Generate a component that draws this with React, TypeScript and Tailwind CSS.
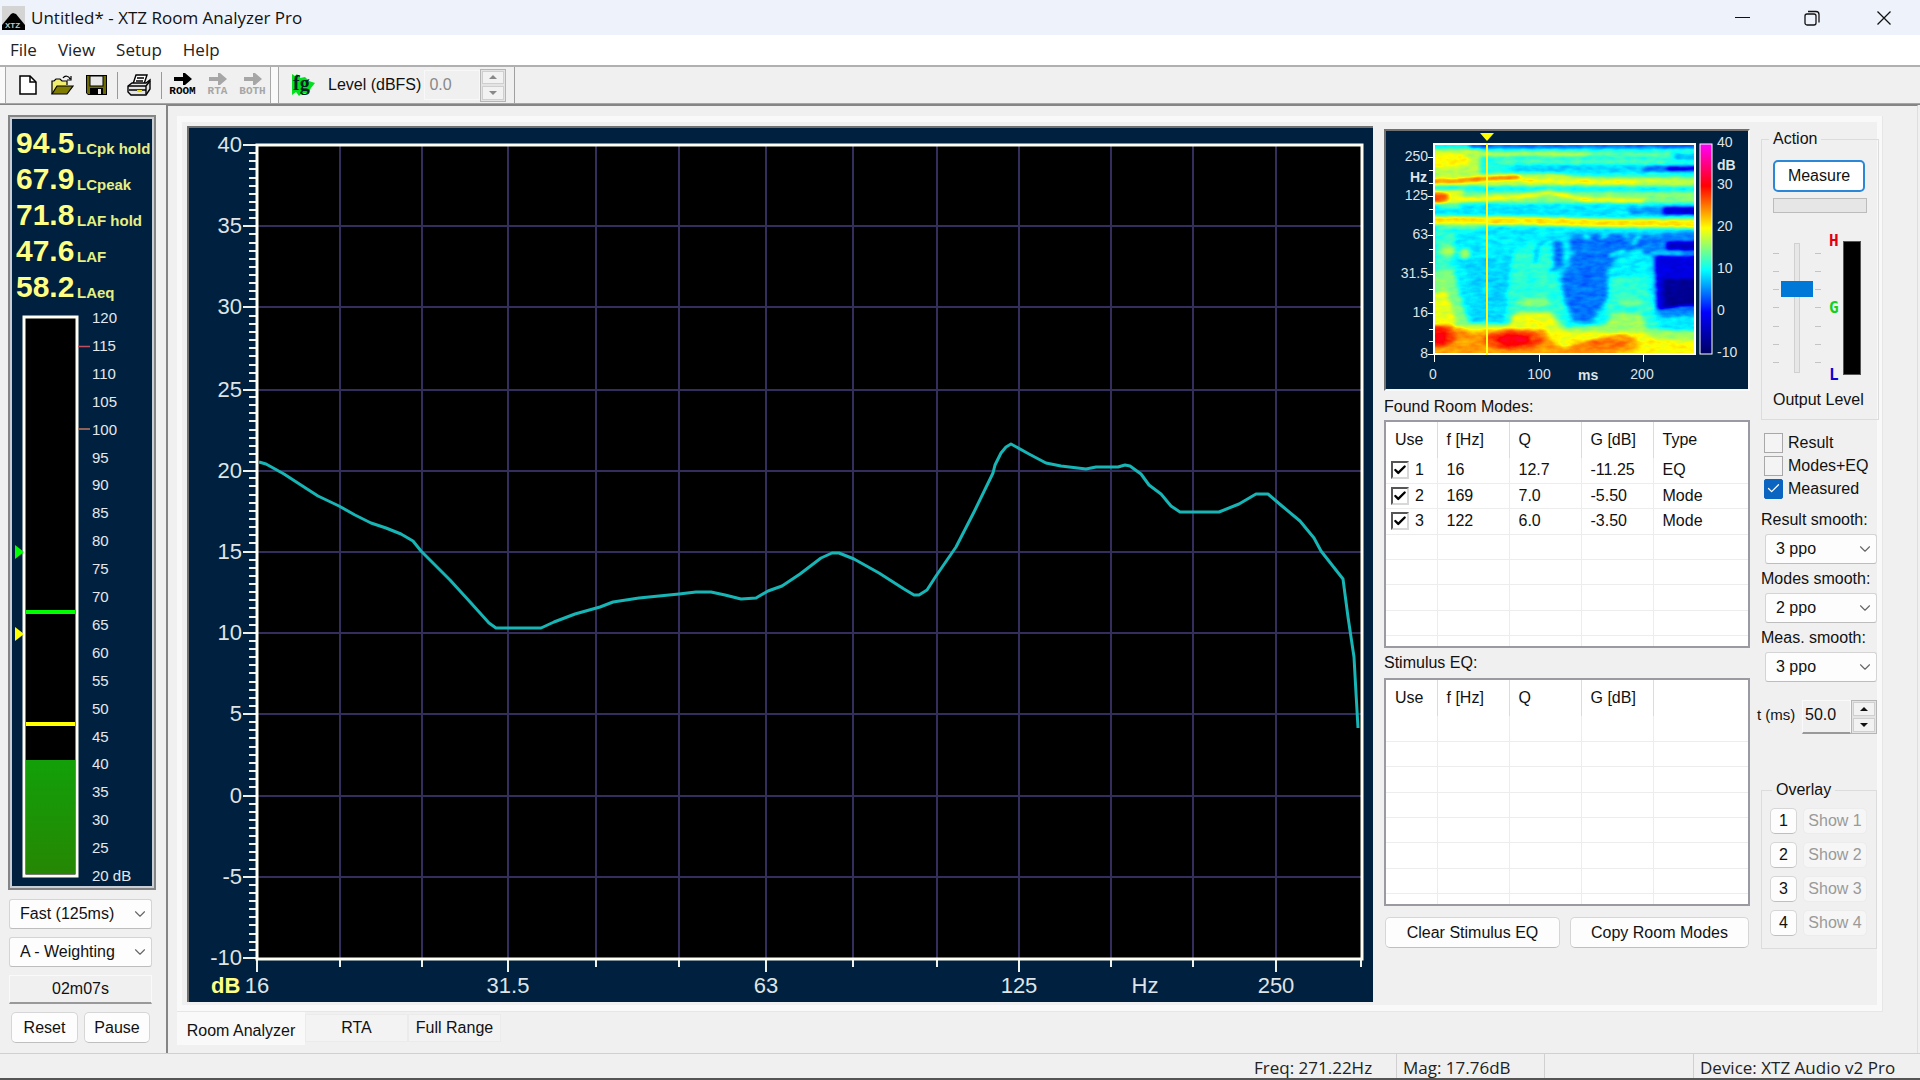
import React from "react";
import { Check, ChevronDown } from "lucide-react";

const meterReadings = [
  { value: "94.5", label: "LCpk hold" },
  { value: "67.9", label: "LCpeak" },
  { value: "71.8", label: "LAF hold" },
  { value: "47.6", label: "LAF" },
  { value: "58.2", label: "LAeq" },
];

const roomModes = [
  ["1", "16", "12.7", "-11.25", "EQ"],
  ["2", "169", "7.0", "-5.50", "Mode"],
  ["3", "122", "6.0", "-3.50", "Mode"],
];

const measured =
  "259,462 266,464 284,474 304,487 318,496 339,506 355,515 371,523 386,528 401,534 413,541 421,551 450,580 471,603 489,623 496,628 541,628 554,622 575,614 600,607 613,602 639,598 679,594 696,592 711,592 725,595 741,599 756,598 768,591 782,586 800,574 821,558 832,553 839,553 854,559 879,573 904,589 914,595 919,595 927,590 936,576 956,547 974,512 993,473 995,465 1001,453 1006,447 1011,444 1029,454 1046,463 1061,466 1086,469 1096,467 1118,467 1125,465 1130,466 1141,474 1149,485 1161,494 1171,506 1180,512 1219,512 1239,504 1256,494 1268,494 1282,506 1300,521 1314,538 1321,551 1343,579 1348,617 1354,657 1356,693 1358,728";

// grey level for a dB value, turned into a colour by the #jet filter
const g = (db: number) => {
  const v = Math.round(((db + 10) / 50) * 255);
  return `rgb(${v},${v},${v})`;
};

function Select({ id, options }: { id: string; options: string[] }) {
  return (
    <div className="relative">
      <select
        id={id}
        aria-label={id}
        className="block h-[30px] w-full appearance-none rounded-[3px] border border-[#d4d4d4] border-b-[#bdbdbd] bg-[#fdfdfd] pl-2.5 text-base leading-5 text-[#111]"
      >
        {options.map((o) => (
          <option key={o}>{o}</option>
        ))}
      </select>
      <ChevronDown
        size={18}
        strokeWidth={1.5}
        className="pointer-events-none absolute right-[3px] top-1.5 text-[#666]"
      />
    </div>
  );
}

function Button({ children, className = "" }: { children: React.ReactNode; className?: string }) {
  return (
    <button
      className={`rounded-[5px] border border-[#d6d6d6] border-b-[#bfbfbf] bg-[#fdfdfd] text-base leading-5 ${className}`}
    >
      {children}
    </button>
  );
}

function TitleBar() {
  return (
    <header className="flex h-[35px] items-center bg-[#eef3fb] pl-0.5 font-['Open_Sans',sans-serif] text-[17px] text-[#111]">
      <svg width="23" height="24" viewBox="0 0 23 24">
        <rect width="23" height="24" fill="#d4d4d4" />
        <path d="M11 7l3 1 9 11v5H0v-5L9 8z" fill="#000" />
        <text x="3" y="22" fontSize="8" fontWeight="bold" fill="#c8c8c8" fontFamily="Liberation Sans, sans-serif">
          XTZ
        </text>
      </svg>
      <h1 className="ml-1.5 flex-1">Untitled* - XTZ Room Analyzer Pro</h1>
      <button aria-label="Minimize" className="flex w-[69px] justify-center">
        <svg width="16" height="16" fill="none" stroke="#111">
          <path d="M0 7.500h15" />
        </svg>
      </button>
      <button aria-label="Restore" className="flex w-[70px] justify-center">
        <svg width="16" height="16" fill="none" stroke="#111" strokeWidth="1.300">
          <rect x="1" y="4" width="11" height="11" rx="2" />
          <path d="M4 1.500h8a3 3 0 0 1 3 3v8" />
        </svg>
      </button>
      <button aria-label="Close" className="flex w-[73px] justify-center">
        <svg width="16" height="16" fill="none" stroke="#111" strokeWidth="1.300">
          <path d="M1.500 1.500l13 13M14.500 1.500l-13 13" />
        </svg>
      </button>
    </header>
  );
}

function MenuBar() {
  return (
    <nav className="flex h-[30px] items-center gap-[21px] bg-white pl-2.5 font-['Open_Sans',sans-serif] text-[17px] leading-[30px] text-[#222]">
      <button>File</button>
      <button>View</button>
      <button>Setup</button>
      <button>Help</button>
    </nav>
  );
}

function ModeButton({ label, active }: { label: string; active?: boolean }) {
  return (
    <button
      className={
        active
          ? "flex w-[35px] flex-col items-center text-black"
          : "flex w-[35px] flex-col items-center text-[#a6a6a6]"
      }
    >
      <svg width="19" height="12" fill="currentColor">
        <path d="M1 4h9V0h2l7 6-7 6h-2V8H1z" />
      </svg>
      <span className="font-['Liberation_Mono',monospace] text-[11px] font-bold leading-3">{label}</span>
    </button>
  );
}

function Spinner({ disabled }: { disabled?: boolean }) {
  const color = disabled ? "#888" : "#111";
  return (
    <div className="flex w-[26px] flex-col gap-0.5 border border-[#b5b5b5] bg-[#e4e4e4] p-px">
      <button aria-label="Increase" className="flex flex-1 items-center justify-center border border-[#cfcfcf] bg-[#f2f2f2]">
        <svg width="8" height="4">
          <path d="M4 0l4 4H0z" fill={color} />
        </svg>
      </button>
      <button aria-label="Decrease" className="flex flex-1 items-center justify-center border border-[#cfcfcf] bg-[#f2f2f2]">
        <svg width="8" height="4">
          <path d="M0 0h8L4 4z" fill={color} />
        </svg>
      </button>
    </div>
  );
}

function Toolbar() {
  return (
    <div className="flex h-[39px] items-stretch border-b border-t-2 border-b-[#a5a5a5] border-t-[#b0b0b0] bg-[#f0f0f0]">
      <div className="w-1.5 border-r border-[#a8a8a8] bg-[#fafafa]" />
      <div className="flex flex-1 items-center">
        <button aria-label="New" className="ml-[13px]">
          <svg width="18" height="20" fill="#fff" stroke="#000" strokeWidth="1.500">
            <path d="M1 1h10l6 6v12H1z" />
            <path d="M11 1v6h6" fill="none" />
          </svg>
        </button>
        <button aria-label="Open" className="ml-3.5">
          <svg width="23" height="20" stroke="#000" strokeWidth="1.200">
            <path d="M1 19V6h2l2-2h4l2 2h5v4" fill="#f2ef70" />
            <path d="M1 19l5-8h16l-6 8z" fill="#807c00" />
            <path d="M12 3c2-3 6-2 7 1m-3 1h4V1" fill="none" />
          </svg>
        </button>
        <button aria-label="Save" className="ml-3">
          <svg width="21" height="20">
            <path d="M0 0h21v20H2l-2-2z" fill="#000" />
            <path d="M1 1h19v18H2L1 18z" fill="#6e6b00" />
            <rect x="4" y="1" width="13" height="10" fill="#e8e8e8" stroke="#000" />
            <rect x="4" y="13" width="13" height="7" fill="#000" />
            <rect x="12" y="14" width="3" height="5" fill="#e8e8e8" />
          </svg>
        </button>
        <div className="ml-2.5 h-[27px] w-px bg-[#999]" />
        <button aria-label="Print" className="ml-[9px]">
          <svg width="25" height="22" stroke="#000" strokeWidth="1.400" fill="#e4e4e4">
            <path d="M6 10l3-9h11l-3 9z" fill="#fff" />
            <path d="M10 4h7M9 7h7" />
            <path d="M1 12l4-3h14l4-3v9l-4 6H4l-3-3z" />
            <path d="M1 12h18l4-5M19 12v8M2 16h17" fill="none" />
            <path d="M10 17h5" stroke="#e5dc00" strokeWidth="2" />
          </svg>
        </button>
        <div className="ml-[9px] mr-[3px] h-[27px] w-px bg-[#999]" />
        <ModeButton label="ROOM" active />
        <ModeButton label="RTA" />
        <ModeButton label="BOTH" />
        <div className="h-full w-[9px] border-x border-[#a8a8a8] bg-[#fafafa]" />
        <svg width="24" height="24" className="ml-3 shrink-0">
          <path d="M1 1l3 2 2-2 3 4 5-1 4 4 6 2-4 5-3 6-6-1-3 3-3-4-4 3z" fill="#00e01c" />
          <text x="2" y="17" fontSize="20" fontWeight="bold" fontFamily="Liberation Serif, serif" fill="#022">
            fg
          </text>
        </svg>
        <label htmlFor="level" className="ml-[13px] text-base leading-5">
          Level (dBFS)
        </label>
        <input
          id="level"
          disabled
          defaultValue="0.0"
          className="ml-[3px] h-[30px] w-14 border border-[#f8f8f8] bg-[#f0f0f0] pl-1 text-base text-[#888]"
        />
        <div className="flex h-[33px]">
          <Spinner disabled />
        </div>
        <div className="ml-2 h-full w-px bg-[#a0a0a0]" />
      </div>
    </div>
  );
}

function LevelMeter() {
  const ticks = Array.from({ length: 21 }, (_, i) => 120 - i * 5);
  return (
    <div className="ml-2 mr-[10px] border-2 border-[#858585] bg-[#c9ced6] p-0.5">
      <svg viewBox="12 119 140 767" className="block h-auto w-full" fontFamily="Liberation Sans, Arial, sans-serif">
        <defs>
          <linearGradient id="bar" x1="0" y1="0" x2="0" y2="1">
            <stop offset="0" stopColor="#12a008" />
            <stop offset="1" stopColor="#268704" />
          </linearGradient>
        </defs>
        <rect x="12" y="119" width="140" height="767" fill="#00203f" />
        {meterReadings.map((r, i) => (
          <g key={r.label} fill="#ffff84" fontWeight="bold">
            <text x="16" y={153 + i * 36} fontSize="30">
              {r.value}
            </text>
            <text x="77" y={154 + i * 36} fontSize="15" fill="#e6ef84">
              {r.label}
            </text>
          </g>
        ))}
        <rect x="24" y="317" width="53" height="559" fill="#000" stroke="#fffff4" strokeWidth="3" />
        <rect x="26" y="760" width="49" height="114" fill="url(#bar)" />
        <rect x="26" y="610" width="49" height="4" fill="#00ff00" />
        <rect x="26" y="722" width="49" height="4" fill="#ffff00" />
        <path d="M15 545l9 7-9 7z" fill="#00ff00" />
        <path d="M15 627l9 7-9 7z" fill="#ffff00" />
        <path d="M78 346.500h12" stroke="#c05060" strokeWidth="1.500" />
        <path d="M78 429h12" stroke="#c07860" strokeWidth="1.500" />
        {ticks.map((t, i) => (
          <text key={t} x="92" y={Math.round(323 + i * 27.9)} fontSize="15" fill="#e4e8ec">
            {t === 20 ? "20 dB" : t}
          </text>
        ))}
      </svg>
    </div>
  );
}

function LeftPanel() {
  return (
    <aside className="w-[168px] shrink-0 border-r-2 border-[#858585] pt-2.5">
      <LevelMeter />
      <div className="mx-[9px] mt-[9px] flex flex-col gap-2">
        <div className="w-[143px]">
          <Select id="Response time" options={["Fast (125ms)", "Slow (1s)"]} />
        </div>
        <div className="w-[143px]">
          <Select id="Weighting filter" options={["A - Weighting", "C - Weighting"]} />
        </div>
        <output className="h-[29px] w-[143px] border border-b-2 border-[#fafafa] border-b-[#999] text-center text-base leading-[26px]">
          02m07s
        </output>
        <div className="flex gap-1.5 px-0.5">
          <Button className="h-[31px] w-[67px]">Reset</Button>
          <Button className="h-[31px] w-[66px]">Pause</Button>
        </div>
      </div>
    </aside>
  );
}

function ResponseChart() {
  const rows = [145, 226, 307, 390, 471, 552, 633, 714, 796, 877, 958];
  const cols = [340, 422, 508, 596, 679, 766, 853, 937, 1019, 1111, 1193, 1276];
  const labels: [number, string][] = [
    [257, "16"],
    [508, "31.5"],
    [766, "63"],
    [1019, "125"],
    [1276, "250"],
  ];
  return (
    <div className="border-l-2 border-t-2 border-[#707070]">
      <svg
        viewBox="189 128 1184 874"
        className="block h-auto w-full"
        fontFamily="Liberation Sans, Arial, sans-serif"
        fontSize="22"
        fill="#dfe4e6"
      >
        <rect x="189" y="128" width="1184" height="874" fill="#00203f" />
        <rect x="257" y="145" width="1105" height="814" fill="#000" />
        <g stroke="#332e5c" strokeWidth="2">
          {rows.slice(1, -1).map((y) => (
            <path key={y} d={`M258 ${y}H1361`} />
          ))}
          {cols.map((x) => (
            <path key={x} d={`M${x} 146V958`} />
          ))}
        </g>
        <g stroke="#eef2ea" strokeWidth="2">
          {Array.from({ length: 100 }, (_, i) => i)
            .filter((i) => i % 10 !== 0)
            .map((i) => (
              <path key={i} d={`M249 ${Math.round(145 + i * 8.13)}h8`} />
            ))}
          {rows.map((y) => (
            <path key={y} d={`M243 ${y}h14`} />
          ))}
          {[257, ...cols, 1361].map((x) => (
            <path key={x} d={`M${x} 959v${labels.some((l) => l[0] === x) ? 13 : 8}`} />
          ))}
        </g>
        <rect x="257" y="145" width="1105" height="814" fill="none" stroke="#fffff4" strokeWidth="3" />
        <polyline points={measured} fill="none" stroke="#17b5b5" strokeWidth="3" strokeLinejoin="round" />
        {rows.map((y, i) => (
          <text key={y} x="242" y={y + 7} textAnchor="end">
            {40 - i * 5}
          </text>
        ))}
        {labels.map(([x, text]) => (
          <text key={text} x={x} y="993" textAnchor="middle">
            {text}
          </text>
        ))}
        <text x="1145" y="993" textAnchor="middle">
          Hz
        </text>
        <text x="211" y="993" fontWeight="bold" fill="#ffff84">
          dB
        </text>
      </svg>
    </div>
  );
}

function Heatmap() {
  return (
    <svg x="51" y="14" width="259" height="208" viewBox="195 102 777 624" preserveAspectRatio="none">
      <g filter="url(#jet)">
        <rect x="150" y="60" width="870" height="710" fill={g(9.5)} />
        {/* treble */}
        <rect x="150" y="110" width="870" height="90" fill={g(11)} />
        <rect x="150" y="114" width="180" height="90" fill={g(17)} />
        <ellipse cx="235" cy="148" rx="65" ry="24" fill={g(20)} />
        <rect x="320" y="122" width="340" height="14" fill={g(17)} />
        <rect x="660" y="124" width="240" height="12" fill={g(14)} />
        <rect x="380" y="148" width="500" height="10" fill={g(13.5)} />
        <rect x="430" y="160" width="390" height="26" fill={g(8.5)} />
        <rect x="300" y="80" width="720" height="32" fill={g(4)} />
        <rect x="820" y="164" width="200" height="18" fill={g(4)} />
        <rect x="890" y="168" width="130" height="10" fill={g(-3)} />
        <rect x="915" y="130" width="100" height="14" fill={g(6)} />
        {/* upper bass ridges */}
        <path d="M150 196L320 190 540 186 640 198 1020 200V226L640 226 300 224 150 226z" fill={g(17.5)} />
        <path d="M150 212L260 210 350 202 450 198" stroke={g(25)} strokeWidth="14" fill="none" />
        <path d="M450 208L540 210 800 214" stroke={g(21)} strokeWidth="9" fill="none" />
        <rect x="270" y="226" width="750" height="12" fill={g(10)} />
        <rect x="150" y="236" width="130" height="42" fill={g(19)} />
        <rect x="280" y="242" width="740" height="34" fill={g(15)} />
        <path d="M280 266L450 258 540 244 640 266 820 270" stroke={g(20)} strokeWidth="13" fill="none" />
        <ellipse cx="205" cy="260" rx="32" ry="16" fill={g(27)} />
        <rect x="150" y="286" width="870" height="26" fill={g(9)} />
        <rect x="210" y="278" width="60" height="14" fill={g(13)} />
        <rect x="780" y="288" width="240" height="22" fill={g(6)} />
        <rect x="880" y="288" width="140" height="22" fill={g(-3)} />
        <path d="M150 328L480 330 700 336 1020 338" stroke={g(21)} strokeWidth="26" fill="none" />
        <path d="M200 350h130" stroke={g(14)} strokeWidth="10" />
        {/* mid bass */}
        <path d="M195 362h60v60l-60 130z" fill={g(12)} />
        <ellipse cx="232" cy="420" rx="22" ry="20" fill={g(16)} />
        <ellipse cx="284" cy="428" rx="16" ry="16" fill={g(16)} />
        <path d="M150 490L250 470 270 560 300 650H150z" fill={g(15)} />
        <path d="M150 560L230 540 260 640H150z" fill={g(19)} />
        <path d="M290 440h140l-10 200H310z" fill={g(8.5)} />
        <path d="M430 420L530 390 570 540 600 660H400z" fill={g(11.5)} />
        <ellipse cx="490" cy="574" rx="50" ry="14" fill={g(15)} />
        <path d="M600 370L780 366 870 380 870 410 790 415 740 440 712 480V560L665 632H612L586 570 574 500 600 460z" fill={g(4.5)} />
        <path d="M552 390h26v82h-26z" fill={g(4)} />
        <path d="M505 400l24-10M495 455l10-50M540 480l40-22" stroke={g(6)} strokeWidth="10" />
        <path d="M585 425h30M715 435l50-16M640 375l20 6M690 378l24-6M760 372l16 8M790 400l20-30M750 490l60-70" stroke={g(10)} strokeWidth="12" />
        <path d="M820 362h200v250l-150 6-20-180-30-10z" fill={g(5)} />
        <path d="M822 366h60M840 426h100" stroke={g(9)} strokeWidth="9" />
        <path d="M890 392h130v24H890z" fill={g(-4)} />
        <path d="M855 436h165v148h-80l-80 14z" fill={g(-2)} />
        <path d="M880 505h140v76h-90l-50 10z" fill={g(-7)} />
        <path d="M720 500l110-10 20 110 20 60H700z" fill={g(11.5)} />
        <ellipse cx="780" cy="572" rx="40" ry="14" fill={g(14)} />
        {/* sub bass */}
        <path d="M150 636L300 636 430 640 440 600 540 600 590 650 710 640 730 606 810 606 830 654 1020 664V800H150z" fill={g(16)} />
        <path d="M430 608h110l20 40H420zM150 610h100v40H150z" fill={g(19.5)} />
        <path d="M150 646L560 650 600 666 820 662 850 684 1020 690V800H150z" fill={g(20)} />
        <path d="M150 644L240 640 300 664 420 654 520 656 556 700 580 712 700 676 770 670 804 690 800 716 740 730 560 800H150z" fill={g(24)} />
        <ellipse cx="200" cy="676" rx="60" ry="32" fill={g(28)} />
        <ellipse cx="200" cy="676" rx="30" ry="22" fill={g(30)} />
        <ellipse cx="430" cy="686" rx="88" ry="30" fill={g(27.5)} />
        <ellipse cx="430" cy="687" rx="50" ry="17" fill={g(31)} />
        <ellipse cx="700" cy="702" rx="76" ry="16" fill={g(25.5)} />
      </g>
    </svg>
  );
}

function Spectrogram() {
  const freqs: [number, string][] = [
    [26, "250"],
    [65, "125"],
    [104, "63"],
    [143, "31.5"],
    [182, "16"],
    [223, "8"],
  ];
  const levels: [number, string][] = [
    [12, "40"],
    [54, "30"],
    [96, "20"],
    [138, "10"],
    [180, "0"],
    [222, "-10"],
  ];
  return (
    <div className="border-2 border-[#707070] border-b-[#f8f8f8] border-r-[#f8f8f8]">
      <svg
        viewBox="2 0 362 258"
        className="block h-auto w-full"
        fontFamily="Liberation Sans, Arial, sans-serif"
        fontSize="14"
        fill="#dfe4e6"
      >
        <defs>
          <filter id="jet" x="0" y="0" width="1" height="1" colorInterpolationFilters="sRGB">
            <feTurbulence type="fractalNoise" baseFrequency="0.03 0.07" numOctaves="2" seed="4" />
            <feColorMatrix values="1 0 0 0 0 1 0 0 0 0 1 0 0 0 0 0 0 0 0 1" result="noise" />
            <feGaussianBlur in="SourceGraphic" stdDeviation="6 4" />
            <feComposite in2="noise" operator="arithmetic" k2="1" k3="0.080" k4="-0.040" />
            <feComponentTransfer>
              <feFuncR type="table" tableValues="0 0 0 1 1 1" />
              <feFuncG type="table" tableValues="0 0 1 1 0 0" />
              <feFuncB type="table" tableValues="0.4 1 1 0 0 1" />
            </feComponentTransfer>
          </filter>
          <linearGradient id="scale" x1="0" y1="0" x2="0" y2="1">
            <stop offset="0" stopColor="#ff00ff" />
            <stop offset="0.2" stopColor="#ff0000" />
            <stop offset="0.4" stopColor="#ffff00" />
            <stop offset="0.6" stopColor="#00ffff" />
            <stop offset="0.8" stopColor="#0000ff" />
            <stop offset="1" stopColor="#000060" />
          </linearGradient>
        </defs>
        <rect width="364" height="260" fill="#00203f" />
        <Heatmap />
        <rect x="50" y="13" width="261" height="210" fill="none" stroke="#fff" strokeWidth="2" />
        <rect x="316" y="13" width="12" height="210" fill="url(#scale)" stroke="#fff" />
        <g stroke="#fff" strokeWidth="1">
          {[39, 52, 78, 92, 118, 131, 158, 171, 198, 210].map((y) => (
            <path key={y} d={`M45 ${y}.5h5`} />
          ))}
          {freqs.map(([y]) => (
            <path key={y} d={`M44 ${y}.5h6`} />
          ))}
          <path d="M50.500 223v8M155.500 223v8M259.500 223v8" />
        </g>
        <path d="M103 12v212" stroke="#ffff20" strokeWidth="2" />
        <path d="M96 2h14l-7 8z" fill="#ffff00" />
        {freqs.map(([y, text]) => (
          <text key={text} x="44" y={y + 4} textAnchor="end">
            {text}
          </text>
        ))}
        {levels.map(([y, text]) => (
          <text key={text} x="333" y={y + 4}>
            {text}
          </text>
        ))}
        <g textAnchor="middle">
          <text x="49" y="248">0</text>
          <text x="155" y="248">100</text>
          <text x="258" y="248">200</text>
        </g>
        <g fontWeight="bold">
          <text x="26" y="51">Hz</text>
          <text x="333" y="39">dB</text>
          <text x="194" y="249">ms</text>
        </g>
      </svg>
    </div>
  );
}

function ModeTable({ columns, rows }: { columns: string[]; rows: string[][] }) {
  return (
    <div className="border-2 border-[#9a9aa2] bg-white">
      <table className="h-[224px] w-full table-fixed border-collapse text-left text-base leading-5">
        <colgroup>
          <col className="w-[51px]" />
          <col className="w-[72px]" />
          <col className="w-[72px]" />
          <col className="w-[72px]" />
          <col />
        </colgroup>
        <thead>
          <tr className="h-9">
            {columns.map((c, i) => (
              <th key={i} className="border-r border-[#dcdcdc] p-0 pl-[9px] font-normal last:border-r-0">
                {c}
              </th>
            ))}
          </tr>
        </thead>
        <tbody>
          {Array.from({ length: 7 }, (_, r) => (
            <tr key={r} className="h-[25px] border-b border-[#ededed]">
              {columns.map((_, c) => (
                <td key={c} className="border-r border-[#ededed] p-0 pl-[9px] last:border-r-0">
                  {c === 0 && rows[r] ? (
                    <label className="-ml-1 flex items-center gap-1.5">
                      <span className="relative flex">
                        <input
                          type="checkbox"
                          defaultChecked
                          className="h-[18px] w-[18px] appearance-none border-2 border-[#d8d8d8] border-l-[#555] border-t-[#555] bg-white"
                        />
                        <Check size={14} strokeWidth={4} className="pointer-events-none absolute left-0.5 top-0.5 text-black" />
                      </span>
                      {rows[r][0]}
                    </label>
                  ) : (
                    rows[r]?.[c]
                  )}
                </td>
              ))}
            </tr>
          ))}
          <tr className="h-2.5">
            {columns.map((_, c) => (
              <td key={c} className="border-r border-[#ededed] p-0 last:border-r-0" />
            ))}
          </tr>
        </tbody>
      </table>
    </div>
  );
}

function ModesColumn() {
  return (
    <section className="w-[366px] shrink-0 pt-[3px]">
      <Spectrogram />
      <h2 className="mb-[3px] mt-1.5 text-base leading-5">Found Room Modes:</h2>
      <ModeTable columns={["Use", "f [Hz]", "Q", "G [dB]", "Type"]} rows={roomModes} />
      <h2 className="my-[5px] text-base leading-5">Stimulus EQ:</h2>
      <ModeTable columns={["Use", "f [Hz]", "Q", "G [dB]", ""]} rows={[]} />
      <div className="mt-[11px] flex gap-2.5 px-px">
        <Button className="h-[31px] w-[175px]">Clear Stimulus EQ</Button>
        <Button className="h-[31px] flex-1">Copy Room Modes</Button>
      </div>
    </section>
  );
}

function TickColumn() {
  return (
    <div className="flex flex-col justify-between py-5">
      {[0, 1, 2, 3, 4, 5, 6].map((i) => (
        <span key={i} className="h-px w-1.5 bg-[#c4c4c4]" />
      ))}
    </div>
  );
}

function ActionBox() {
  return (
    <fieldset className="h-[291px] border border-[#dcdcdc] px-[11px] pt-[11px]">
      <legend className="-ml-1 px-1 text-base leading-5">Action</legend>
      <button className="block h-8 w-[92px] rounded-[5px] border-2 border-[#2b88d8] bg-white text-base leading-5">
        Measure
      </button>
      <div className="mt-1.5 h-[15px] w-[94px] border border-[#bcbcbc] bg-[#e6e6e6]" />
      <div className="mt-5 flex h-[150px]">
        <TickColumn />
        <div className="mx-0.5 flex w-8 py-2.5">
          <input
            id="output-level"
            type="range"
            min={0}
            max={6}
            defaultValue={4}
            className="h-[130px] w-8 appearance-none bg-transparent [direction:rtl] [writing-mode:vertical-lr] [&::-webkit-slider-runnable-track]:w-1.5 [&::-webkit-slider-runnable-track]:border [&::-webkit-slider-runnable-track]:border-[#d0d0d0] [&::-webkit-slider-runnable-track]:bg-[#e7e7e7] [&::-webkit-slider-thumb]:-ml-[14px] [&::-webkit-slider-thumb]:h-4 [&::-webkit-slider-thumb]:w-8 [&::-webkit-slider-thumb]:appearance-none [&::-webkit-slider-thumb]:bg-[#0078d7]"
          />
        </div>
        <TickColumn />
        <div className="ml-2 flex w-3 flex-col justify-between font-['DejaVu_Sans_Mono',monospace] text-base font-bold leading-4">
          <span className="text-[#e00010]">H</span>
          <span className="text-[#10d020]">G</span>
          <span className="text-[#1000d8]">L</span>
        </div>
        <div className="my-2 ml-0.5 w-[18px] border border-[#555] bg-black" />
      </div>
      <label htmlFor="output-level" className="mt-[7px] block whitespace-nowrap text-base leading-5">
        Output Level
      </label>
    </fieldset>
  );
}

function TraceToggle({ label, checked }: { label: string; checked?: boolean }) {
  return (
    <label className="flex h-5 items-center gap-[5px] whitespace-nowrap text-base leading-5">
      <span className="relative flex">
        <input
          type="checkbox"
          defaultChecked={checked}
          className="h-5 w-[19px] appearance-none border border-[#a8a8a8] bg-[#f4f4f4] checked:rounded-xs checked:border-[#0a64c0] checked:bg-[#0a64c0]"
        />
        {checked && <Check size={15} strokeWidth={2} className="pointer-events-none absolute left-0.5 top-0.5 text-white" />}
      </span>
      {label}
    </label>
  );
}

function ControlsColumn() {
  return (
    <section className="w-[120px] shrink-0 pt-[3px]">
      <div className="flex flex-col pl-1">
        <ActionBox />
        <div className="ml-[3px] mt-[13px] flex flex-col gap-[3px]">
          <TraceToggle label="Result" />
          <TraceToggle label="Modes+EQ" />
          <TraceToggle label="Measured" checked />
        </div>
        <div className="mt-[11px] flex flex-col gap-[5px] whitespace-nowrap text-base leading-5">
          {[
            ["Result smooth:", "3 ppo"],
            ["Modes smooth:", "2 ppo"],
            ["Meas. smooth:", "3 ppo"],
          ].map(([name, value]) => (
            <div key={name}>
              <label htmlFor={name} className="mb-1 block">
                {name}
              </label>
              <div className="ml-1">
                <Select id={name} options={[value, "6 ppo", "12 ppo"]} />
              </div>
            </div>
          ))}
        </div>
      </div>
      <div className="mt-[18px] flex h-[34px]">
        <label htmlFor="time" className="w-[45px] whitespace-nowrap text-[15px] leading-[30px]">
          t (ms)
        </label>
        <input
          id="time"
          defaultValue="50.0"
          className="w-[49px] border border-b-2 border-[#fafafa] border-b-[#999] bg-[#f0f0f0] pb-1 pl-0.5 text-base leading-5"
        />
        <Spinner />
      </div>
      <fieldset className="ml-1 mt-[46px] border border-[#dcdcdc] px-2 pb-3 pt-2">
        <legend className="ml-0.5 px-1 text-base leading-5">Overlay</legend>
        <div className="flex flex-col gap-2">
          {[1, 2, 3, 4].map((n) => (
            <div key={n} className="flex gap-1.5">
              <Button className="h-[26px] w-[27px]">{n}</Button>
              <button
                disabled
                className="h-[26px] w-16 whitespace-nowrap rounded-[5px] border border-[#ececec] bg-[#f6f6f6] text-base leading-5 text-[#9a9a9a]"
              >
                Show {n}
              </button>
            </div>
          ))}
        </div>
      </fieldset>
    </section>
  );
}

function StatusBar() {
  return (
    <footer className="flex h-[27px] items-stretch justify-end border-b-2 border-t border-b-[#555] border-t-[#d0d0d0] bg-[#f0f0f0] font-['Open_Sans',sans-serif] text-[17px] leading-7 text-[#222]">
      <span className="w-[142px] whitespace-nowrap">Freq: 271.22Hz</span>
      <span className="w-[148px] whitespace-nowrap border-l border-[#d0d0d0] pl-1.5">Mag: 17.76dB</span>
      <span className="w-[149px] border-l border-[#d0d0d0]" />
      <span className="w-[227px] whitespace-nowrap border-l border-[#d0d0d0] pl-1.5">Device: XTZ Audio v2 Pro</span>
    </footer>
  );
}

export default function App() {
  return (
    <div className="flex min-h-screen flex-col bg-[#f0f0f0] font-['Liberation_Sans',Arial,sans-serif] text-[#111]">
      <TitleBar />
      <MenuBar />
      <Toolbar />
      <main className="flex flex-1 border-t border-[#858585]">
        <LeftPanel />
        <div className="mr-0.5 flex-1 border-r border-t border-[#dedede] border-t-[#858585] pb-1 pl-[9px] pr-[34px] pt-2.5">
          <div className="border-b border-r border-[#e6e6e6] bg-[#f9f9f9] pb-1.5 pl-[5px] pr-[5px] pt-1.5">
            <div className="flex items-start bg-[#f0f0f0] pb-[3px] pl-[5px] pt-1">
              <div className="mr-[11px] min-w-0 flex-1">
                <ResponseChart />
              </div>
              <ModesColumn />
              <div className="w-[7px] shrink-0" />
              <ControlsColumn />
            </div>
          </div>
          <div className="flex items-start text-base leading-5">
            <button className="h-[33px] w-[128px] whitespace-nowrap bg-[#f9f9f9] pt-1">Room Analyzer</button>
            <button className="mt-0.5 h-7 w-[103px] border border-[#ebebeb] bg-[#f3f3f3]">RTA</button>
            <button className="mt-0.5 h-7 w-[93px] whitespace-nowrap border border-[#ebebeb] bg-[#f3f3f3]">
              Full Range
            </button>
          </div>
        </div>
      </main>
      <StatusBar />
    </div>
  );
}
